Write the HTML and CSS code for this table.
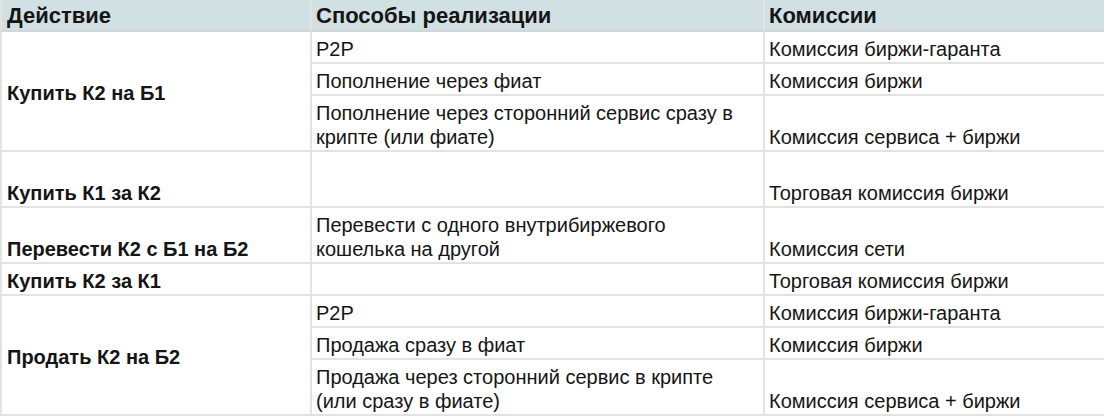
FILE: index.html
```html
<!DOCTYPE html>
<html lang="ru">
<head>
<meta charset="utf-8">
<title>Комиссии</title>
<link rel="stylesheet" href="styles.css">
</head>
<body>
<table class="sheet">
  <colgroup>
    <col class="c-action">
    <col class="c-method">
    <col class="c-fee">
  </colgroup>
  <thead>
    <tr class="row">
      <th class="cell head first">Действие</th>
      <th class="cell head">Способы реализации</th>
      <th class="cell head">Комиссии</th>
    </tr>
  </thead>
  <tbody>
    <tr class="row">
      <td class="cell action first" rowspan="3">Купить К2 на Б1</td>
      <td class="cell">P2P</td>
      <td class="cell">Комиссия биржи-гаранта</td>
    </tr>
    <tr class="row">
      <td class="cell">Пополнение через фиат</td>
      <td class="cell">Комиссия биржи</td>
    </tr>
    <tr class="row tall">
      <td class="cell">Пополнение через сторонний сервис сразу в<br>крипте (или фиате)</td>
      <td class="cell">Комиссия сервиса + биржи</td>
    </tr>
    <tr class="row tall">
      <td class="cell action first bottom">Купить К1 за К2</td>
      <td class="cell"></td>
      <td class="cell">Торговая комиссия биржи</td>
    </tr>
    <tr class="row tall">
      <td class="cell action first bottom">Перевести К2 с Б1 на Б2</td>
      <td class="cell">Перевести с одного внутрибиржевого<br>кошелька на другой</td>
      <td class="cell">Комиссия сети</td>
    </tr>
    <tr class="row">
      <td class="cell action first bottom">Купить К2 за К1</td>
      <td class="cell"></td>
      <td class="cell">Торговая комиссия биржи</td>
    </tr>
    <tr class="row">
      <td class="cell action first" rowspan="3">Продать К2 на Б2</td>
      <td class="cell">P2P</td>
      <td class="cell">Комиссия биржи-гаранта</td>
    </tr>
    <tr class="row">
      <td class="cell">Продажа сразу в фиат</td>
      <td class="cell">Комиссия биржи</td>
    </tr>
    <tr class="row tall">
      <td class="cell">Продажа через сторонний сервис в крипте<br>(или сразу в фиате)</td>
      <td class="cell">Комиссия сервиса + биржи</td>
    </tr>
  </tbody>
</table>
</body>
</html>
```

FILE: styles.css
```css
html, body {
  margin: 0;
  padding: 0;
  background: #ffffff;
}

.sheet {
  border-collapse: separate;
  border-spacing: 0;
  width: 1120px;
  table-layout: fixed;
  font-family: "Liberation Sans", Arial, sans-serif;
  font-size: 20px;
  line-height: 24px;
  color: #151515;
}

.c-action { width: 312px; }
.c-method { width: 453px; }
.c-fee { width: 355px; }

.cell {
  padding: 5px 5px 1px 4px;
  border-right: 2px solid #e2e2e2;
  border-bottom: 2px solid #e2e2e2;
  vertical-align: bottom;
  text-align: left;
  font-weight: normal;
  white-space: nowrap;
  overflow: hidden;
}

.cell.first {
  border-left: 2px solid #e2e2e2;
  padding-left: 5px;
}

.row { height: 32px; }
.row.tall { height: 56px; }

.head {
  background: #d0e0e3;
  font-weight: bold;
  font-size: 22px;
  padding-top: 4px;
  padding-bottom: 2px;
  border-bottom-color: #d5d5d5;
}

.action {
  font-weight: bold;
  vertical-align: middle;
}

.action.bottom {
  vertical-align: bottom;
}
```
